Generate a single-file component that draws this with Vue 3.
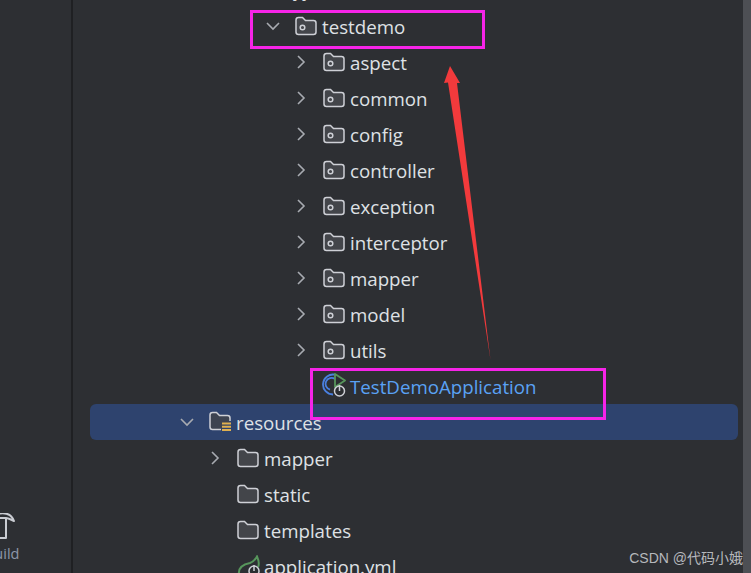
<template>
  <div class="ide">
    <aside class="tool_strip">
      <div class="build">
        <svg class="hammer" width="24" height="34" viewBox="0 0 24 34" fill="none">
          <path d="M-6 2 C3 -1 11 0 14 8 C10 6 8 5 6 5 L6 25 L-1 25 M-1 5 H6" stroke="#c9ccd2" stroke-width="2" stroke-linejoin="round" />
        </svg>
        <span class="build_label">Build</span>
      </div>
    </aside>

    <main class="tree">
      <div class="stub">yy</div>
      <div
        v-for="(row, index) in rows"
        :key="index"
        class="row"
        :class="[row.type, { selected: row.selected }]"
        :style="{ paddingLeft: row.indent + 'px' }"
      >
        <span class="arrow">
          <svg v-if="row.arrow === 'right'" width="10" height="14" viewBox="0 0 10 14" fill="none">
            <path d="M2 1 L8 7 L2 13" stroke="#a8abb1" stroke-width="1.6" />
          </svg>
          <svg v-if="row.arrow === 'down'" width="14" height="10" viewBox="0 0 14 10" fill="none">
            <path d="M1 2 L7 8 L13 2" stroke="#a8abb1" stroke-width="1.6" />
          </svg>
        </span>

        <svg v-if="row.type === 'package'" class="icon" width="22" height="20" viewBox="0 0 22 20" fill="none">
          <path d="M1 4 Q1 1.500 3.500 1.500 H7.500 L10.500 4.500 H18.500 Q21 4.500 21 7 V16 Q21 18.500 18.500 18.500 H3.500 Q1 18.500 1 16 Z" fill="#43454a" stroke="#ced0d6" stroke-width="1.500" />
          <circle cx="7.500" cy="11.500" r="2.300" stroke="#ced0d6" stroke-width="1.500" />
        </svg>
        <svg v-if="row.type === 'folder'" class="icon" width="22" height="20" viewBox="0 0 22 20" fill="none">
          <path d="M1 4 Q1 1.500 3.500 1.500 H7.500 L10.500 4.500 H18.500 Q21 4.500 21 7 V16 Q21 18.500 18.500 18.500 H3.500 Q1 18.500 1 16 Z" fill="#43454a" stroke="#ced0d6" stroke-width="1.500" />
        </svg>
        <svg v-if="row.type === 'resources'" class="icon" width="24" height="22" viewBox="0 0 24 22" fill="none">
          <path d="M12 18.500 H3.500 Q1 18.500 1 16 V4 Q1 1.500 3.500 1.500 H7.500 L10.500 4.500 H18.500 Q21 4.500 21 7 V10" fill="#3d4350" stroke="#ced0d6" stroke-width="1.500" />
          <path d="M13 12.500 H22 M13 15.700 H22 M13 19 H22" stroke="#e0b04f" stroke-width="2" />
        </svg>
        <svg v-if="row.type === 'app'" class="icon" width="24" height="26" viewBox="0 0 24 26" fill="none">
          <path d="M13 1.700 A10 10 0 1 0 11 21.500" stroke="#4a80e0" stroke-width="1.800" />
          <path d="M13 6 A6 6 0 1 0 8 16.700" stroke="#4a80e0" stroke-width="1.800" />
          <path d="M13 1 L23 7.500 L13 14 Z" fill="#2b2d30" stroke="#57965c" stroke-width="1.800" stroke-linejoin="round" />
          <circle cx="17.500" cy="18" r="5" fill="#2b2d30" stroke="#ced0d6" stroke-width="1.500" />
          <path d="M17.500 12 V18" stroke="#ced0d6" stroke-width="1.500" />
        </svg>
        <svg v-if="row.type === 'yml'" class="icon" width="24" height="22" viewBox="0 0 24 22" fill="none">
          <path d="M2 19 C1 11 8 9 13 8 C16 7 18 5 20 1.500 C22 6 22 10 21 12" stroke="#57965c" stroke-width="2" />
          <circle cx="17" cy="16" r="5" fill="#2b2d30" stroke="#ced0d6" stroke-width="1.500" />
          <path d="M17 10 V16" stroke="#ced0d6" stroke-width="1.500" />
        </svg>

        <span class="name">{{ row.name }}</span>
      </div>
    </main>

    <div class="scrollbar"></div>

    <!-- 标注框和箭头 -->
    <div class="mark mark_top"></div>
    <div class="mark mark_app"></div>
    <svg class="red_arrow" width="70" height="320" viewBox="0 0 70 320">
      <path d="M20 16 L14 33 L18 32.500 L60.500 310 L27 33 L30 33 Z" fill="#f23a3c" />
    </svg>
    <div class="watermark">CSDN @代码小娥</div>
  </div>
</template>

<script setup>
const pkg = ["aspect", "common", "config", "controller", "exception", "interceptor", "mapper", "model", "utils"];

const rows = [
  { name: "testdemo", type: "package", arrow: "down", indent: 173 },
  ...pkg.map((name) => ({ name, type: "package", arrow: "right", indent: 201 })),
  { name: "TestDemoApplication", type: "app", arrow: "", indent: 200 },
  { name: "resources", type: "resources", arrow: "down", indent: 87, selected: true },
  { name: "mapper", type: "folder", arrow: "right", indent: 115 },
  { name: "static", type: "folder", arrow: "", indent: 115 },
  { name: "templates", type: "folder", arrow: "", indent: 115 },
  { name: "application.yml", type: "yml", arrow: "", indent: 115 },
];
</script>

<style>
html,
body {
  margin: 0;
  background: #2b2d30;
  overflow: hidden;
}
</style>

<style scoped>
.ide {
  position: relative;
  display: flex;
  width: 751px;
  height: 573px;
  overflow: hidden;
  background-color: #2d2f33;
  font-family: "Open Sans", "Noto Sans CJK SC", sans-serif;
  color: #dfe1e5;
}

.tool_strip {
  flex: 0 0 71px;
  display: flex;
  flex-direction: column;
  justify-content: flex-end;
  border-right: 2px solid #1f2023;
}

.build {
  height: 60px;
  overflow: hidden;
}

.hammer {
  display: block;
  overflow: visible;
}

.build_label {
  display: block;
  margin-top: -3px;
  margin-left: -15px;
  font-size: 14.5px;
  color: #8d97aa;
}

.tree {
  flex: 1;
  margin-top: -28px;
  min-width: 0;
}

.stub {
  height: 36px;
  line-height: 36px;
  padding-left: 220px;
  font-size: 18.7px;
}

.row {
  display: flex;
  align-items: center;
  height: 36px;
  margin: 0 13px 0 17px;
  font-size: 18.7px;
  white-space: nowrap;
}

.selected {
  background-color: #2e436e;
  border-radius: 6px;
}

.app .name {
  color: #5aa2f5;
}

.arrow {
  flex: 0 0 20px;
  display: flex;
  align-items: center;
  justify-content: center;
  margin-right: 12px;
}

.icon {
  flex-shrink: 0;
  margin-right: 5px;
}

.resources .icon,
.yml .icon {
  margin-right: 3px;
}

.app .icon {
  margin-right: 4px;
}

.scrollbar {
  position: absolute;
  right: 0;
  top: 0;
  bottom: 0;
  width: 8px;
  background-color: #4d4f54;
}

.mark {
  position: absolute;
  border: 3px solid #f624e8;
}

.mark_top {
  left: 250px;
  top: 10px;
  width: 229px;
  height: 33px;
}

.mark_app {
  left: 310px;
  top: 368px;
  width: 290px;
  height: 46px;
}

.red_arrow {
  position: absolute;
  left: 430px;
  top: 50px;
}

.watermark {
  position: absolute;
  right: 8px;
  bottom: 6px;
  font-family: "Liberation Sans", "Noto Sans CJK SC", sans-serif;
  font-size: 14px;
  color: #b6b8bc;
}
</style>
